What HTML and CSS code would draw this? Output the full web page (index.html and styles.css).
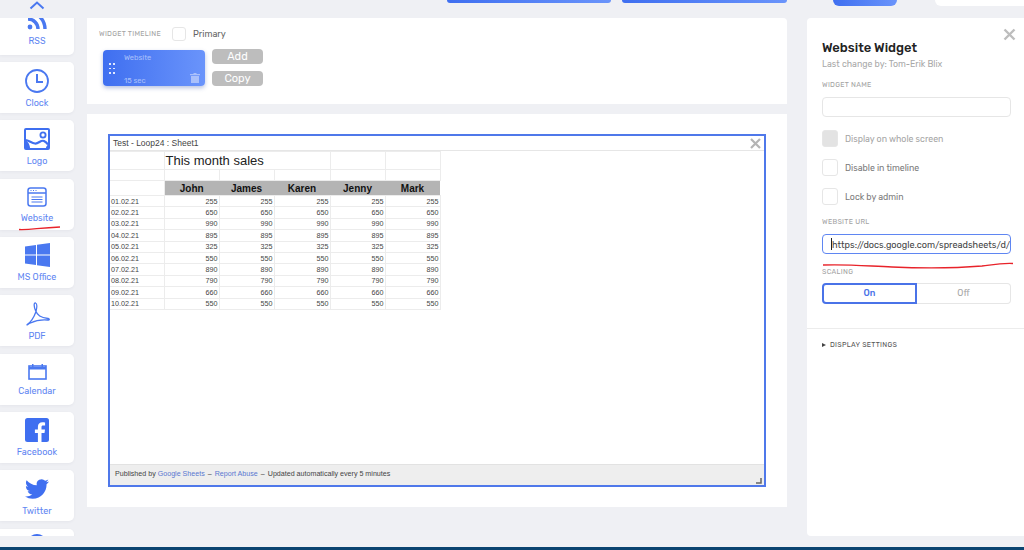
FILE: index.html
```html
<!DOCTYPE html>
<html lang="en">
<head>
<meta charset="utf-8">
<title>Website Widget</title>
<link rel="stylesheet" href="styles.css">
</head>
<body>
<div class="app">
  <header class="top">
    <div class="chev"><svg width="16" height="9" viewBox="0 0 16 9"><path d="M1.500 7.500 8 1.600l6.500 5.900" fill="none" stroke="#4a78f0" stroke-width="2"/></svg></div>
    <span class="tb tb1"></span><span class="tb tb2"></span><span class="tb tb3"></span><span class="tb tb4"></span>
  </header>
  <div class="main">
    <nav class="side">
      <div class="list">
        <div class="card card-rss">
          <div class="ic"><svg width="24" height="24" viewBox="0 0 24 24" fill="none" stroke="#4a78f0" stroke-width="3.400"><path d="M3 4a17 17 0 0 1 17 17"/><path d="M3 11a10 10 0 0 1 10 10"/><circle cx="5" cy="19" r="2.400" fill="#4a78f0" stroke="none"/></svg></div>
          <span class="lb">RSS</span>
        </div>
        <div class="card">
          <div class="ic"><svg width="24" height="24" viewBox="0 0 24 24" fill="none" stroke="#4a78f0" stroke-width="1.800"><circle cx="12" cy="12" r="11"/><path d="M12 5v8h6" stroke-width="2"/></svg></div>
          <span class="lb">Clock</span>
        </div>
        <div class="card">
          <div class="ic"><svg width="26" height="22" viewBox="0 0 26 22"><rect x="1" y="1" width="24" height="20" rx="1" fill="#fff" stroke="#3f6ff0" stroke-width="2"/><path d="M1.500 12c3 0 6 3 9.500 3.500s6-4 9-2.500 3.500 3 4 3.500" fill="none" stroke="#3f6ff0" stroke-width="2.200"/><path d="M1 12c0 4 0 8 0 8h5c0-3-2-7-5-8zM24 17c-1 0-2 2-2 3h3z" fill="#3f6ff0"/><circle cx="19" cy="7" r="2.600" fill="#fff" stroke="#3f6ff0" stroke-width="1.800"/></svg></div>
          <span class="lb">Logo</span>
        </div>
        <div class="card">
          <div class="ic"><svg width="20" height="20" viewBox="0 0 20 20" fill="none" stroke="#4a78f0"><rect x="1" y="1" width="18" height="18" rx="2.500" stroke-width="1.500"/><path d="M1 6h18" stroke-width="1.500"/><path d="M3.500 3.500h1M6 3.500h1M8.500 3.500h1" stroke-width="1.200"/><path d="M4.500 10h11M4.500 12.500h11M4.500 15h11" stroke-width="1.200"/></svg></div>
          <span class="lb lb-web">Website</span>
        </div>
        <div class="card">
          <div class="ic"><svg width="25" height="24" viewBox="0 0 25 24" fill="#4a78f0"><path d="M0 3.500 11 2v9.500H0zM12 1.800 25 0v11.500H12zM0 12.500h11V22L0 20.500zM12 12.500h13V24l-13-1.800z"/></svg></div>
          <span class="lb">MS Office</span>
        </div>
        <div class="card">
          <div class="ic"><svg width="25" height="24" viewBox="0 0 25 24" fill="none" stroke="#4a78f0" stroke-width="1.300"><path d="M2 22.500c3-1 7-7 9-13 1-4 1-8-.5-8.500-2-.5-1.500 4 0 7.500 2 5 5 7 12.500 8 2 .5 1.500 2-.5 1.500-6-.5-13 1-17 3-3 1.500-4 2.500-3.500 1.500"/></svg></div>
          <span class="lb">PDF</span>
        </div>
        <div class="card">
          <div class="ic"><svg width="19" height="16" viewBox="0 0 19 16"><rect x="1" y="2" width="17" height="13" fill="#fff" stroke="#4a78f0" stroke-width="1.600"/><path d="M1 3h17v2.500H1zM4 0h1.500v3H4zM13.500 0H15v3h-1.500z" fill="#4a78f0"/></svg></div>
          <span class="lb lb-cal">Calendar</span>
        </div>
        <div class="card">
          <div class="ic"><svg width="24" height="24" viewBox="0 0 24 24"><rect width="24" height="24" rx="2.500" fill="#3f6ff0"/><path d="M16.500 24v-9h3l.5-3.500h-3.500V9.300c0-1 .3-1.700 1.800-1.700h1.800V4.400c-.4 0-1.500-.2-2.700-.2-2.700 0-4.500 1.600-4.500 4.600v2.700h-3V15h3v9z" fill="#fff"/></svg></div>
          <span class="lb">Facebook</span>
        </div>
        <div class="card">
          <div class="ic"><svg width="24" height="24" viewBox="0 0 24 24" fill="#3f6ff0"><path d="M23.953 4.57a10 10 0 01-2.825.775 4.958 4.958 0 002.163-2.723c-.951.555-2.005.959-3.127 1.184a4.92 4.92 0 00-8.384 4.482C7.69 8.095 4.067 6.13 1.64 3.162a4.822 4.822 0 00-.666 2.475c0 1.71.87 3.213 2.188 4.096a4.904 4.904 0 01-2.228-.616v.06a4.923 4.923 0 003.946 4.827 4.996 4.996 0 01-2.212.085 4.936 4.936 0 004.604 3.417 9.867 9.867 0 01-6.102 2.105c-.39 0-.779-.023-1.17-.067a13.995 13.995 0 007.557 2.209c9.053 0 13.998-7.496 13.998-13.985 0-.21 0-.42-.015-.63A9.935 9.935 0 0024 4.590z"/></svg></div>
          <span class="lb">Twitter</span>
        </div>
        <div class="card">
          <div class="ic"><span class="peek"></span></div>
        </div>
      </div>
      <svg class="red red-web" width="44" height="5" viewBox="0 0 44 5"><path d="M1 3.500c12 .5 18-1.500 41-2.500" fill="none" stroke="#e8232a" stroke-width="1.300"/></svg>
    </nav>

    <div class="center">
      <section class="panel tl">
        <div class="tl-head">
          <span class="cap tl-cap">WIDGET TIMELINE</span>
          <span class="box"></span>
          <span class="prim">Primary</span>
        </div>
        <div class="tl-body">
          <div class="clip">
            <span class="dots"><i></i><i></i><i></i><i></i><i></i><i></i></span>
            <div class="clip-text"><span>Website</span><span>15 sec</span></div>
            <svg class="trash" width="10" height="10" viewBox="0 0 10 10" fill="#a9c0fb"><path d="M3.500 0h3v1H10v1.200H0V1h3.500zM1 3h8v7H1z"/></svg>
          </div>
          <div class="btns"><span class="gbtn">Add</span><span class="gbtn">Copy</span></div>
        </div>
      </section>
      <section class="panel pv">
        <div class="frame">
          <div class="f-head"><span>Test - Loop24 : Sheet1</span><svg width="11" height="11" viewBox="0 0 11 11"><path d="M1 1l9 9M10 1l-9 9" stroke="#b5b5b5" stroke-width="2.200"/></svg></div>
          <div class="f-body">
            <table class="sheet">
              <colgroup><col class="c0"><col class="c1"><col class="c2"><col class="c3"><col class="c4"><col class="c5"></colgroup>
              <tr class="r-title"><td></td><td colspan="3" class="ttl">This month sales</td><td></td><td></td></tr>
              <tr class="r-gap"><td></td><td></td><td></td><td></td><td></td><td></td></tr>
              <tr class="r-head"><td></td><th>John</th><th>James</th><th>Karen</th><th>Jenny</th><th>Mark</th></tr>
              <tr><td>01.02.21</td><td>255</td><td>255</td><td>255</td><td>255</td><td>255</td></tr>
              <tr><td>02.02.21</td><td>650</td><td>650</td><td>650</td><td>650</td><td>650</td></tr>
              <tr><td>03.02.21</td><td>990</td><td>990</td><td>990</td><td>990</td><td>990</td></tr>
              <tr><td>04.02.21</td><td>895</td><td>895</td><td>895</td><td>895</td><td>895</td></tr>
              <tr><td>05.02.21</td><td>325</td><td>325</td><td>325</td><td>325</td><td>325</td></tr>
              <tr><td>06.02.21</td><td>550</td><td>550</td><td>550</td><td>550</td><td>550</td></tr>
              <tr><td>07.02.21</td><td>890</td><td>890</td><td>890</td><td>890</td><td>890</td></tr>
              <tr><td>08.02.21</td><td>790</td><td>790</td><td>790</td><td>790</td><td>790</td></tr>
              <tr><td>09.02.21</td><td>660</td><td>660</td><td>660</td><td>660</td><td>660</td></tr>
              <tr><td>10.02.21</td><td>550</td><td>550</td><td>550</td><td>550</td><td>550</td></tr>
            </table>
          </div>
          <div class="f-foot">
            <span>Published by <a>Google Sheets</a><span class="sep">–</span><a>Report Abuse</a><span class="sep">–</span>Updated automatically every 5 minutes</span>
            <svg class="grip" width="6" height="6" viewBox="0 0 6 6"><path d="M5 0v5H0" fill="none" stroke="#666" stroke-width="1.500"/></svg>
          </div>
        </div>
      </section>
    </div>

    <aside class="right">
      <svg class="close" width="13" height="13" viewBox="0 0 13 13"><path d="M1.500 1.500l10 10M11.500 1.500l-10 10" stroke="#bdbdbd" stroke-width="2.400"/></svg>
      <div class="form">
        <h1>Website Widget</h1>
        <p class="sub">Last change by: Tom-Erik Blix</p>
        <label class="cap f-cap">WIDGET NAME</label>
        <div class="input"></div>
        <div class="chk first"><span class="box big on"></span><span class="muted">Display on whole screen</span></div>
        <div class="chk"><span class="box big"></span><span>Disable in timeline</span></div>
        <div class="chk"><span class="box big"></span><span>Lock by admin</span></div>
        <label class="cap url-cap">WEBSITE URL</label>
        <div class="input url"><i class="caret"></i>https://docs.google.com/spreadsheets/d/</div>
        <label class="cap scale-cap">SCALING</label>
        <div class="seg"><span class="seg-on">On</span><span class="seg-off">Off</span></div>
      </div>
      <svg class="red red-url" width="194" height="8" viewBox="0 0 194 8"><path d="M1 3c24-1 44 1 69 2 35 1.500 65 1 90-1 12-1.500 18-3 31-2.500" fill="none" stroke="#e8232a" stroke-width="1.300"/></svg>
      <div class="disp"><span class="tri"></span><span>DISPLAY SETTINGS</span></div>
    </aside>
  </div>
  <footer class="bar"></footer>
</div>
</body>
</html>
```

FILE: styles.css
```css
* { box-sizing: border-box; }
html, body { margin: 0; padding: 0; }
body { width: 1024px; height: 550px; overflow: hidden; background: #eff0f4; font-family: Rubik, Inter, "Noto Sans", sans-serif; }
.app { height: 550px; display: flex; flex-direction: column; }

.top { height: 18px; flex: none; display: flex; align-items: flex-start; }
.chev { width: 74px; display: flex; justify-content: center; padding-top: 1px; }
.tb { display: block; background: linear-gradient(90deg, #3f6ff0, #6a94fb); border-radius: 0 0 9px 9px; }
.tb1 { width: 164px; height: 3px; margin-left: 373px; }
.tb2 { width: 165px; height: 3px; margin-left: 11px; }
.tb3 { width: 64px; height: 6px; margin-left: 46px; }
.tb4 { width: 89px; height: 6px; margin-left: 38px; background: #fff; border-radius: 0 0 0 9px; }

.main { flex: 1; min-height: 0; display: flex; }
.bar { height: 3px; flex: none; background: #0b4470; }

.side { width: 87px; flex: none; height: 518px; position: relative; overflow: hidden; }
.list { width: 74px; margin-top: -14.330px; display: flex; flex-direction: column; gap: 7.330px; }
.card { height: 51px; flex: none; background: #fff; border-radius: 0 5px 5px 0; box-shadow: 0 1px 3px rgba(60,70,110,.06); display: flex; flex-direction: column; align-items: center; }
.ic { height: 37px; width: 100%; flex: none; display: flex; align-items: center; justify-content: center; }
.card-rss .ic { height: 33px; }
.lb { font-size: 9px; line-height: 8px; color: #5f86f2; white-space: nowrap; margin-top: -.5px; }
.card-rss .lb { margin-top: 0; }
.lb-web { margin-top: -2px; }
.lb-cal { margin-top: -4px; }
.peek { width: 20px; height: 20px; align-self: flex-start; margin-top: 5px; background: #3f6ff0; border-radius: 50%; }
.red { position: absolute; }
.red-web { left: 18px; top: 208px; }

.center { width: 700px; flex: none; display: flex; flex-direction: column; gap: 10px; height: 489px; }
.panel { background: #fff; }
.tl { height: 86px; padding: 9px 0 0 12px; border-radius: 0 4px 0 0; }
.tl-head { display: flex; align-items: center; height: 14px; }
.cap { font-size: 7px; line-height: 8px; letter-spacing: .3px; color: #a2a2a2; display: block; }
.tl-cap { width: 73px; white-space: nowrap; }
.box { display: block; width: 14px; height: 14px; border: 1px solid #e6e6e6; border-radius: 3px; background: #fff; flex: none; }
.prim { margin-left: 7px; font-size: 9px; color: #666; }
.tl-body { display: flex; margin: 9px 0 0 4px; }
.clip { position: relative; width: 102px; height: 36px; border-radius: 4px; background: linear-gradient(90deg, #3f6ff0, #6a94fb); box-shadow: 0 2px 4px rgba(50,80,170,.35); display: flex; }
.dots { width: 8px; margin: 13px 0 0 6px; display: grid; grid-template-columns: 1px 1px; column-gap: 3px; row-gap: 3px; align-content: start; }
.dots i { width: 1.500px; height: 1.500px; background: #dfe8ff; }
.clip-text { margin-left: 7px; padding: 3px 0 1px; display: flex; flex-direction: column; justify-content: space-between; font-size: 7.500px; line-height: 9px; color: #a9c0fb; }
.trash { position: absolute; right: 5px; bottom: 3px; }
.btns { margin-left: 7px; display: flex; flex-direction: column; gap: 7px; margin-top: -1px; }
.gbtn { width: 51px; height: 15px; background: #bdbdbd; border-radius: 4px; color: #fff; font-size: 11px; line-height: 15px; text-align: center; }

.pv { height: 393px; padding: 20px 0 0 21px; }
.frame { width: 658px; height: 353px; border: 2px solid #4f78ea; display: flex; flex-direction: column; font-family: "Liberation Sans", Arial, sans-serif; background: #fff; }
.f-head { height: 15px; flex: none; display: flex; align-items: center; justify-content: space-between; padding: 0 3px 0 3px; font-size: 8.500px; color: #444; border-bottom: 1px solid #e6e6e6; }
.f-body { flex: 1; min-height: 0; }
.sheet { border-collapse: collapse; table-layout: fixed; width: 330px; font-size: 7.200px; color: #444; }
.c0 { width: 54px; } .c1 { width: 55px; } .c2 { width: 55px; } .c3 { width: 56px; } .c4 { width: 55px; } .c5 { width: 55px; }
.sheet td { height: 11.400px; padding: 0 1px; line-height: 7px; border: 1px solid #ececec; border-left: 0; text-align: right; overflow: hidden; }
.sheet td:first-child { text-align: left; }
.sheet tr.r-title td { height: 18px; }
.sheet tr.r-gap td { height: 11px; }
.sheet td.ttl { text-align: left; font-size: 13px; line-height: 15px; color: #222; padding-left: 1px; }
.sheet tr.r-head td { height: 15px; }
.sheet th { height: 15px; padding: 0; background: #b4b4b4; font-size: 10px; line-height: 11px; color: #111; text-align: center; border: 0; }
.f-foot { height: 21px; flex: none; position: relative; background: #eeeeee; border-top: 1px solid #e2e2e2; padding-left: 5px; font-size: 7.120px; line-height: 18px; color: #444; white-space: nowrap; }
.f-foot a { color: #5a78d0; }
.sep { margin: 0 3px; }
.grip { position: absolute; right: 2px; bottom: 1px; }

.right { flex: 1; margin-left: 20px; height: 518px; background: #fff; border-radius: 4px 0 0 4px; position: relative; }
.close { position: absolute; top: 10px; right: 8px; }
.form { padding: 22px 13px 0 15px; height: 311px; border-bottom: 1px solid #ececec; }
h1 { margin: 0; font-size: 13px; line-height: 15px; font-weight: 500; color: #222; }
.sub { margin: 3px 0 0; font-size: 8.800px; line-height: 12px; color: #a8a8a8; }
.f-cap { margin-top: 11px; }
.input { margin-top: 8px; width: 189px; height: 20px; border: 1px solid #e6e6e6; border-radius: 4px; }
.chk { display: flex; align-items: center; gap: 7px; height: 17px; margin-top: 12px; font-size: 8.800px; color: #7b7b7b; }
.chk.first { margin-top: 13px; }
.box.big { width: 16px; height: 17px; border-radius: 3px; }
.box.on { background: #e3e3e3; }
.muted { color: #a5a5a5; }
.url-cap { margin-top: 13px; }
.url { margin-top: 8px; border-color: #5f86f2; display: flex; align-items: center; padding-left: 8px; font-size: 9.100px; color: #444; white-space: nowrap; overflow: hidden; }
.caret { width: 1px; height: 12px; background: #222; flex: none; }
.scale-cap { margin-top: 14px; }
.seg { display: flex; width: 189px; height: 21px; margin-top: 7px; font-size: 9px; line-height: 17px; text-align: center; }
.seg-on { width: 95px; border: 2px solid #4a73e8; border-radius: 4px 0 0 4px; color: #4a73e8; font-weight: 500; }
.seg-off { flex: 1; border: 1px solid #e6e6e6; border-left: 0; border-radius: 0 4px 4px 0; color: #a5a5a5; line-height: 19px; }
.red-url { left: 15px; top: 244px; }
.disp { display: flex; align-items: center; gap: 4px; padding: 11px 0 0 15px; font-size: 7px; line-height: 9px; letter-spacing: .3px; color: #555; }
.tri { width: 0; height: 0; border-left: 4px solid #444; border-top: 2.500px solid transparent; border-bottom: 2.500px solid transparent; }
```
